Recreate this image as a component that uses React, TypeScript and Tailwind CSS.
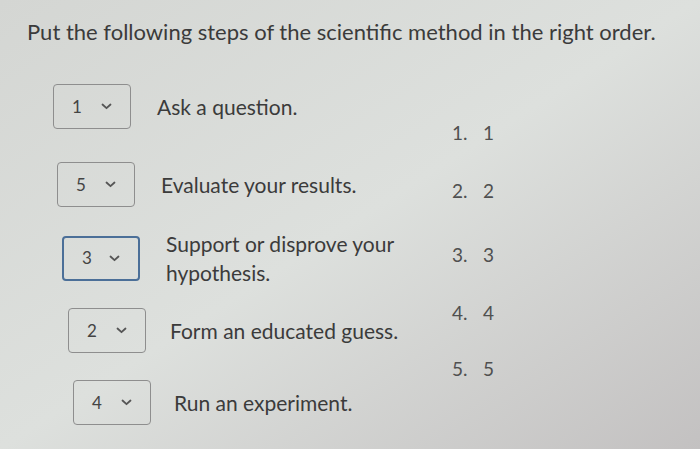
import React from 'react';

const steps = [
  { value: '1', text: 'Ask a question.', ml: 'ml-[53px]', mt: 'mt-0', tl: 'ml-[26px]', active: false },
  { value: '5', text: 'Evaluate your results.', ml: 'ml-[57px]', mt: 'mt-[33px]', tl: 'ml-[26px]', active: false },
  { value: '3', text: 'Support or disprove your hypothesis.', ml: 'ml-[62px]', mt: 'mt-[22px]', tl: 'ml-[26px]', active: true },
  { value: '2', text: 'Form an educated guess.', ml: 'ml-[68px]', mt: 'mt-[21px]', tl: 'ml-[24px]', active: false },
  { value: '4', text: 'Run an experiment.', ml: 'ml-[73px]', mt: 'mt-[27px]', tl: 'ml-[23px]', active: false },
];

const answers = [
  { n: '1', mt: 'mt-[37px]' },
  { n: '2', mt: 'mt-[34px]' },
  { n: '3', mt: 'mt-[40px]' },
  { n: '4', mt: 'mt-[34px]' },
  { n: '5', mt: 'mt-[32px]' },
];

function Chevron() {
  return (
    <svg width="11" height="7" viewBox="0 0 11 7" fill="none">
      <path d="M1.5 1.5L5.5 5.2L9.5 1.5" stroke="#555" strokeWidth="1.8" strokeLinecap="round" strokeLinejoin="round" />
    </svg>
  );
}

export default function App() {
  return (
    <div
      className="w-[700px] h-[449px] overflow-hidden bg-gradient-to-br from-[#d4d6d3] via-[#dde0dd] to-[#c3c1c1] text-[#3b3b3b]"
      style={{ fontFamily: 'Lato, "Open Sans", sans-serif' }}
    >
      <h1 className="pt-[17px] pl-[27px] text-[22px] leading-[30px] font-normal">
        Put the following steps of the scientific method in the right order.
      </h1>

      <div className="flex mt-[37px]">
        <div className="w-[445px] flex flex-col">
          {steps.map((s) => (
            <div key={s.value} className={`flex items-center ${s.ml} ${s.mt}`}>
              <div
                className={`w-[78px] h-[45px] shrink-0 rounded-[4px] flex items-center pl-[18px] pr-[18px] justify-between ${
                  s.active ? 'border-2 border-[#4b6f98]' : 'border border-[#8e8e8e]'
                }`}
              >
                <span className="text-[17px] text-[#444]">{s.value}</span>
                <Chevron />
              </div>
              <p className={`${s.tl} w-[250px] text-[21px] leading-[29px] text-[#3b3b3b]`}>{s.text}</p>
            </div>
          ))}
        </div>

        <ol className="flex flex-col pl-[7px]">
          {answers.map((a) => (
            <li key={a.n} className={`flex text-[19px] leading-[24px] text-[#505050] ${a.mt}`}>
              <span className="w-[31px]">{a.n}.</span>
              <span>{a.n}</span>
            </li>
          ))}
        </ol>
      </div>
    </div>
  );
}
